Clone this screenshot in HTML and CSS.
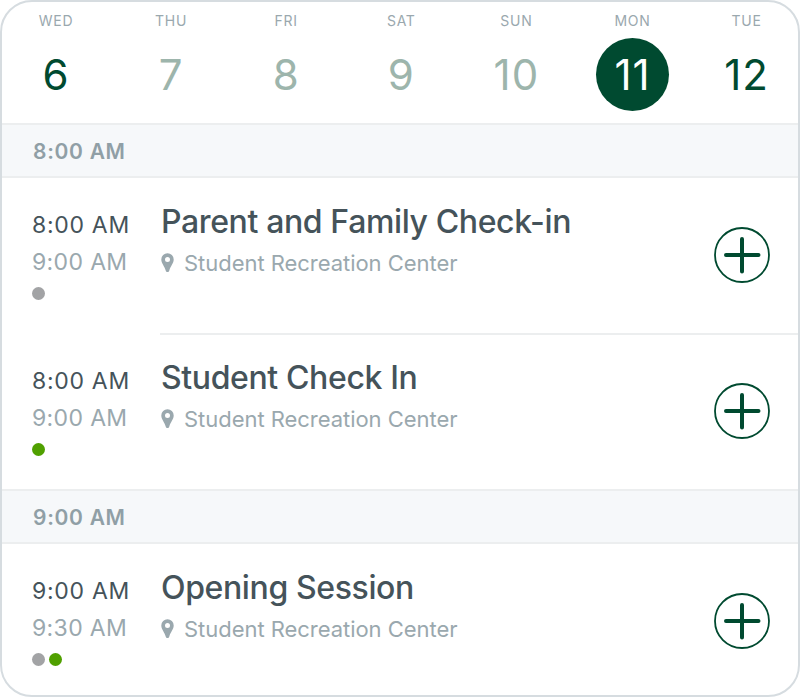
FILE: index.html
```html
<!DOCTYPE html>
<html lang="en"><head><meta charset="utf-8"><title>Schedule</title><link rel="stylesheet" href="styles.css"></head>
<body>
<svg class="defs" width="0" height="0"><defs>
<symbol id="pin" viewBox="0 0 13 20"><path fill-rule="evenodd" d="M6.500 .3A6.200 6.200 0 0 0 .3 6.500C.3 10.300 3.600 13.200 4.700 17.600C5.200 19.600 7.800 19.600 8.300 17.600C9.400 13.200 12.700 10.300 12.700 6.500A6.200 6.200 0 0 0 6.500 .3ZM6.500 4a2.500 2.500 0 1 1 0 5a2.500 2.500 0 0 1 0-5Z"/></symbol>
<symbol id="plus" viewBox="0 0 56 56"><circle cx="28" cy="28" r="27" fill="none" stroke="currentColor" stroke-width="1.800"/><path d="M28 12V44.500M12 28H44.500" stroke="currentColor" stroke-width="4" stroke-linecap="round"/></symbol>
</defs></svg>
<main class="app">
<nav class="week">
<div class="day on"><span class="name">WED</span><span class="num">6</span></div>
<div class="day"><span class="name">THU</span><span class="num">7</span></div>
<div class="day"><span class="name">FRI</span><span class="num">8</span></div>
<div class="day"><span class="name">SAT</span><span class="num">9</span></div>
<div class="day"><span class="name">SUN</span><span class="num">10</span></div>
<div class="day selected"><span class="name">MON</span><span class="num">11</span></div>
<div class="day on"><span class="name">TUE</span><span class="num">12</span></div>
</nav>
<h2 class="hour">8:00 AM</h2>
<article class="event"><div class="times"><span class="start">8:00 AM</span><span class="end">9:00 AM</span><div class="dots"><i class="dot"></i></div></div><div class="info"><h3>Parent and Family Check-in</h3><p><svg class="pin"><use href="#pin"/></svg><span>Student Recreation Center</span></p></div><button class="add" aria-label="Add"><svg><use href="#plus"/></svg></button></article>
<article class="event divided"><div class="times"><span class="start">8:00 AM</span><span class="end">9:00 AM</span><div class="dots"><i class="dot green"></i></div></div><div class="info"><h3>Student Check In</h3><p><svg class="pin"><use href="#pin"/></svg><span>Student Recreation Center</span></p></div><button class="add" aria-label="Add"><svg><use href="#plus"/></svg></button></article>
<h2 class="hour">9:00 AM</h2>
<article class="event"><div class="times"><span class="start">9:00 AM</span><span class="end">9:30 AM</span><div class="dots"><i class="dot"></i><i class="dot green"></i></div></div><div class="info"><h3>Opening Session</h3><p><svg class="pin"><use href="#pin"/></svg><span>Student Recreation Center</span></p></div><button class="add" aria-label="Add"><svg><use href="#plus"/></svg></button></article>
</main>
</body></html>
```
FILE: styles.css
```css
* { box-sizing: border-box; }
html, body { margin: 0; height: 100%; overflow: hidden; background: #fff; }
body { font-family: Inter, "Liberation Sans", sans-serif; }
.defs { display: block; }
.app { width: 800px; height: 697px; border: 2px solid #d6dce0; border-radius: 32px; overflow: hidden; background: #fff; }
.week { height: 121px; padding: 10px 0 0 16px; display: grid; grid-template-columns: repeat(7, 115.1px); }
.day { width: 76px; display: flex; flex-direction: column; align-items: center; color: #9db5ac; }
.name { font-size: 14px; line-height: 18px; letter-spacing: .7px; color: #9aa8ae; }
.num { width: 73px; height: 73px; margin-top: 8px; border-radius: 50%; display: grid; place-items: center; font-size: 42px; line-height: 50px; letter-spacing: 1px; }
.on { color: #004a30; }
.selected { width: 78px; }
.selected .num { background: #004a30; color: #fff; }
.hour { margin: 0; height: 55px; padding-left: 31px; border-top: 2px solid #eceeef; border-bottom: 2px solid #eceeef; background: #f6f8fa; font-size: 21px; font-weight: 600; line-height: 53px; letter-spacing: .7px; color: #909fa6; }
.event { height: 155px; display: flex; position: relative; padding: 26px 28px 0 30px; }
.event.divided { height: 156px; padding-top: 27px; }
.divided::before { content: ""; position: absolute; top: 0; left: 158px; right: 0; height: 2px; background: #eceeef; }
.times { width: 129px; padding-top: 3px; display: flex; flex-direction: column; font-size: 23px; line-height: 37px; color: #9aa8ae; letter-spacing: .35px; }
.start { color: #45535a; letter-spacing: .7px; }
.dots { display: flex; gap: 4px; margin-top: 6px; }
.dot { width: 13px; height: 13px; border-radius: 50%; background: #a2a3a5; }
.green { background: #50a000; }
.info { flex: 1; }
h3 { margin: 0; font-size: 32px; line-height: 36px; font-weight: 500; letter-spacing: -.38px; color: #45535a; white-space: nowrap; }
p { margin: 8px 0 0; display: flex; align-items: center; font-size: 22px; line-height: 30px; letter-spacing: -.04px; color: #9aa8ae; }
.pin { width: 13px; height: 20px; margin-right: 10px; fill: currentColor; }
.add { width: 56px; height: 56px; margin: 23px 0 0; padding: 0; border: 0; background: none; color: #004a30; }
.add svg { width: 56px; height: 56px; display: block; }
```
